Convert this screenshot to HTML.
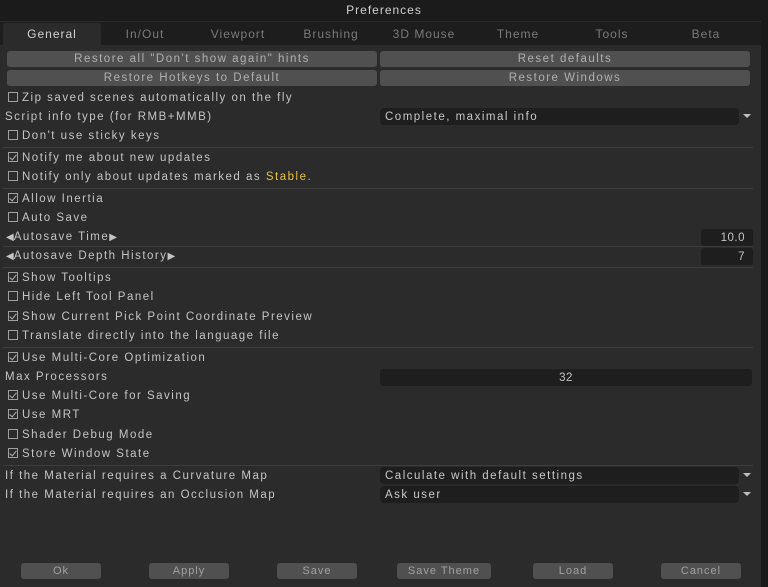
<!DOCTYPE html>
<html><head><meta charset="utf-8"><style>
*{margin:0;padding:0;box-sizing:border-box}
body{width:768px;height:587px;background:#2b2b2b;font-family:"Liberation Sans","DejaVu Sans",sans-serif;font-size:11.5px;color:#c4c4c4;letter-spacing:1.5px;position:relative;overflow:hidden}
.a{position:absolute;white-space:nowrap}
.title{left:0;top:0;width:768px;height:21px;background:#1b1b1b;text-align:center;line-height:21px;color:#d0d0d0;font-size:12px;letter-spacing:1px}
.tabs{left:0;top:22px;width:762px;height:23px;background:#1d1d1d}
.tab{position:absolute;top:23px;height:22px;line-height:23px;text-align:center;color:#7a7a7a;font-size:12px;letter-spacing:1px}
.tab.act{background:#2b2b2b;color:#d0d0d0;border-radius:3px 3px 0 0}
.btn{position:absolute;height:16px;background:#505050;border-radius:3px;text-align:center;line-height:17px;color:#b0b0b0}
.cb{display:inline-block;width:10px;height:10px;border:1px solid #a0a0a0;margin-right:4px;vertical-align:-1px;position:relative}
.cb.k::after{content:"";position:absolute;left:2px;top:0px;width:3px;height:6px;border:solid #b0b0b0;border-width:0 1.3px 1.3px 0;transform:rotate(40deg)}
.row{position:absolute;left:8px;height:19px;line-height:19px;white-space:nowrap}
.hr{position:absolute;left:3px;width:750px;height:1px;background:#3d3d3d}
.dd{position:absolute;left:380px;width:359px;height:17px;background:#1e1e1e;border-radius:4px;line-height:18px;padding-left:5px;color:#c8c8c8}
.arr{position:absolute;left:743px;width:0;height:0;border-left:4px solid transparent;border-right:4px solid transparent;border-top:4px solid #c0c0c0}
.num{position:absolute;background:#1e1e1e;border-radius:3px;height:17px;line-height:18px;text-align:right;padding-right:8px;letter-spacing:0.5px}
.bb{position:absolute;top:563px;height:16px;background:#505050;border-radius:3px;text-align:center;line-height:17px;color:#a0a0a0;font-size:11px;letter-spacing:1px}
.t{font-size:10px;letter-spacing:0}
</style></head><body>
<div class="a title">Preferences</div>
<div class="a tabs"></div>
<div class="tab act" style="left:3px;width:98px">General</div>
<div class="tab" style="left:97px;width:96px">In/Out</div>
<div class="tab" style="left:190px;width:96px">Viewport</div>
<div class="tab" style="left:283px;width:96px">Brushing</div>
<div class="tab" style="left:376px;width:96px">3D Mouse</div>
<div class="tab" style="left:470px;width:96px">Theme</div>
<div class="tab" style="left:564px;width:96px">Tools</div>
<div class="tab" style="left:658px;width:96px">Beta</div>
<div style="position:absolute;left:761px;top:20px;width:7px;height:567px;background:#1a1a1a"></div>

<div class="btn" style="left:7px;top:51px;width:370px">Restore all "Don't show again" hints</div>
<div class="btn" style="left:380px;top:51px;width:370px">Reset defaults</div>
<div class="btn" style="left:7px;top:70px;width:370px">Restore Hotkeys to Default</div>
<div class="btn" style="left:380px;top:70px;width:370px">Restore Windows</div>

<div class="row" style="top:89px"><span class="cb"></span>Zip saved scenes automatically on the fly</div>
<div class="row" style="top:108px;left:5px">Script info type (for RMB+MMB)</div>
<div class="dd" style="top:108px">Complete, maximal info</div><div class="arr" style="top:114px"></div>
<div class="row" style="top:127px"><span class="cb"></span>Don't use sticky keys</div>
<div class="hr" style="top:147px"></div>
<div class="row" style="top:149px"><span class="cb k"></span>Notify me about new updates</div>
<div class="row" style="top:168px"><span class="cb"></span>Notify only about updates marked as <span style="color:#e8c040">Stable</span>.</div>
<div class="hr" style="top:188px"></div>
<div class="row" style="top:190px"><span class="cb k"></span>Allow Inertia</div>
<div class="row" style="top:209px"><span class="cb"></span>Auto Save</div>
<div class="row" style="top:228px;left:6px"><span class="t">◀</span>Autosave Time<span class="t">▶</span></div>
<div class="num" style="left:701px;top:229px;width:52px">10.0</div>
<div class="hr" style="top:246px"></div>
<div class="row" style="top:247px;left:6px"><span class="t">◀</span>Autosave Depth History<span class="t">▶</span></div>
<div class="num" style="left:701px;top:248px;width:52px">7</div>
<div class="hr" style="top:267px"></div>
<div class="row" style="top:269px"><span class="cb k"></span>Show Tooltips</div>
<div class="row" style="top:288px"><span class="cb"></span>Hide Left Tool Panel</div>
<div class="row" style="top:308px"><span class="cb k"></span>Show Current Pick Point Coordinate Preview</div>
<div class="row" style="top:327px"><span class="cb"></span>Translate directly into the language file</div>
<div class="hr" style="top:347px"></div>
<div class="row" style="top:349px"><span class="cb k"></span>Use Multi-Core Optimization</div>
<div class="row" style="top:368px;left:5px">Max Processors</div>
<div class="num" style="left:380px;top:369px;width:372px;text-align:center;padding:0">32</div>
<div class="row" style="top:387px"><span class="cb k"></span>Use Multi-Core for Saving</div>
<div class="row" style="top:406px"><span class="cb k"></span>Use MRT</div>
<div class="row" style="top:426px"><span class="cb"></span>Shader Debug Mode</div>
<div class="row" style="top:445px"><span class="cb k"></span>Store Window State</div>
<div class="hr" style="top:465px"></div>
<div class="row" style="top:467px;left:5px">If the Material requires a Curvature Map</div>
<div class="dd" style="top:467px">Calculate with default settings</div><div class="arr" style="top:473px"></div>
<div class="row" style="top:486px;left:5px">If the Material requires an Occlusion Map</div>
<div class="dd" style="top:486px">Ask user</div><div class="arr" style="top:492px"></div>

<div class="bb" style="left:21px;width:80px">Ok</div>
<div class="bb" style="left:149px;width:80px">Apply</div>
<div class="bb" style="left:277px;width:80px">Save</div>
<div class="bb" style="left:397px;width:94px">Save Theme</div>
<div class="bb" style="left:533px;width:80px">Load</div>
<div class="bb" style="left:661px;width:80px">Cancel</div>
</body></html>
